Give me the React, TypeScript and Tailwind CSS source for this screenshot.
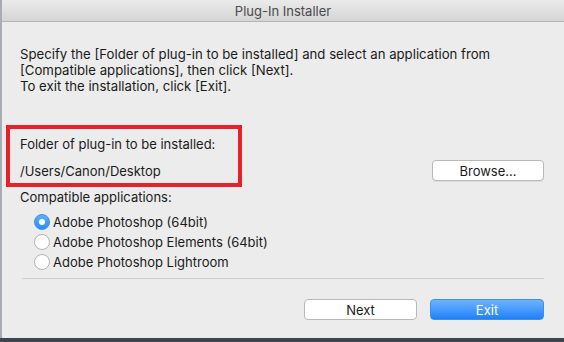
export default function App() {
  const apps = [
    "Adobe Photoshop (64bit)",
    "Adobe Photoshop Elements (64bit)",
    "Adobe Photoshop Lightroom",
  ];

  return (
    <div
      className="w-[564px] h-[342px] bg-[#3a4551] overflow-hidden"
      style={{ fontFamily: 'Inter, "Liberation Sans", Arial, sans-serif' }}
    >
      <div className="h-[338px] bg-[#ececec] border-l-2 border-[#a7adb3] flex flex-col text-[13px] leading-[16px] text-[#1a1a1a]">
        {/* title bar */}
        <div className="h-[22px] shrink-0 flex items-center justify-center border-b border-[#b4b4b4] bg-gradient-to-b from-[#ebebeb] to-[#d5d5d5] text-[#4a4a4a]">
          Plug-In Installer
        </div>

        <div className="flex flex-col pl-[18px] pr-[20px] pt-[24px]">
          <p className="text-[13.2px]">
            Specify the [Folder of plug-in to be installed] and select an application from
            <br />
            [Compatible applications], then click [Next].
            <br />
            To exit the installation, click [Exit].
          </p>

          <div className="flex items-start justify-between mt-[31px]">
            <div className="-ml-[14px] w-[236px] border-4 border-[#e8202a] pl-[10px] pt-[7px] pb-[4px]">
              <div>Folder of plug-in to be installed:</div>
              <div className="mt-[11px]">/Users/Canon/Desktop</div>
            </div>
            <button className="mt-[35px] w-[112px] h-[21px] rounded-[4px] bg-white border border-[#b9b9b9] shadow-[0_1px_0_rgba(0,0,0,0.06)] text-[#1a1a1a]">
              Browse...
            </button>
          </div>

          <div className="mt-[2px]">Compatible applications:</div>

          <div className="flex flex-col mt-[7px] pl-[14px]">
            {apps.map((name, i) => (
              <label key={name} className="h-[20px] flex items-center gap-[3px]">
                {i === 0 ? (
                  <span className="w-[16px] h-[16px] rounded-full bg-gradient-to-b from-[#5caefd] to-[#2a8cf9] border border-[#3a8ee8] flex items-center justify-center">
                    <span className="w-[6px] h-[6px] rounded-full bg-white" />
                  </span>
                ) : (
                  <span className="w-[16px] h-[16px] rounded-full bg-white border border-[#b3b3b3]" />
                )}
                <span>{name}</span>
              </label>
            ))}
          </div>

          <div className="mt-[6px] ml-[2px] h-px bg-[#cfcfcf]" />

          <div className="flex justify-end gap-[13px] mt-[20px]">
            <button className="w-[113px] h-[21px] rounded-[4px] bg-white border border-[#b9b9b9] text-[#1a1a1a]">
              Next
            </button>
            <button className="w-[114px] h-[21px] rounded-[4px] bg-gradient-to-b from-[#6cb3fd] to-[#1b80fb] border border-[#3b8ff0] text-white">
              Exit
            </button>
          </div>
        </div>
      </div>
    </div>
  );
}
